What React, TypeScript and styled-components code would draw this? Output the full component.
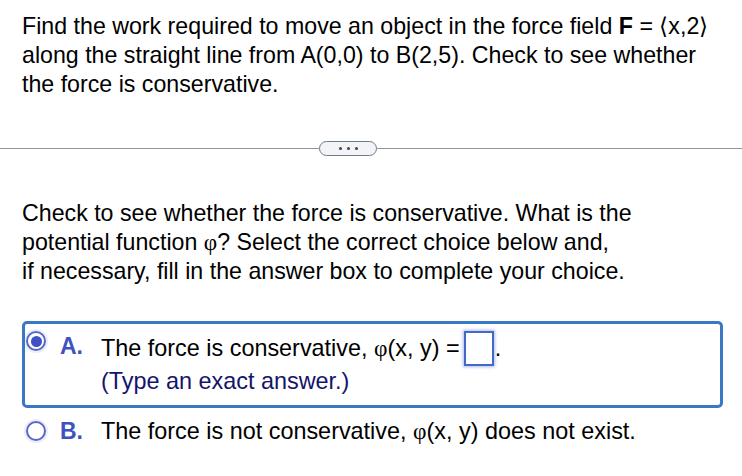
import styled, { createGlobalStyle } from "styled-components";

const GlobalStyle = createGlobalStyle`
  html, body {
    margin: 0;
    padding: 0;
    background: #ffffff;
  }
  body {
    font-family: "Liberation Sans", Arial, sans-serif;
    color: #000000;
  }
`;

const Page = styled.div`
  width: 742px;
  height: 476px;
  overflow: hidden;
  display: flex;
  flex-direction: column;
`;

const Prompt = styled.p<{ $top: number }>`
  margin: ${(p) => p.$top}px 0 0 0;
  padding: 0 22px;
  font-size: 23.2px;
  line-height: 29px;
  white-space: nowrap;
`;

const Bold = styled.b`
  font-weight: 700;
`;

const Phi = styled.span`
  font-family: "Liberation Serif", "Times New Roman", serif;
`;

const Divider = styled.div`
  margin-top: 42px;
  height: 15px;
  display: flex;
  align-items: center;
`;

const Rule = styled.div<{ $w?: number }>`
  height: 1px;
  background: #8d96a2;
  flex: ${(p) => (p.$w ? `0 0 ${p.$w}px` : "1 1 auto")};
`;

const Pill = styled.div`
  width: 56px;
  height: 13px;
  border: 1px solid #6f7a88;
  border-radius: 8px;
  background: #f2f4f7;
  display: flex;
  align-items: center;
  justify-content: center;
  gap: 5px;
`;

const Dot = styled.span`
  width: 3px;
  height: 3px;
  border-radius: 50%;
  background: #3c4450;
`;

const Choices = styled.div`
  margin-top: 35px;
  padding: 0 19px 0 22px;
  display: flex;
  flex-direction: column;
`;

const Choice = styled.div<{ $selected?: boolean }>`
  display: grid;
  grid-template-columns: 34px 41px 1fr;
  align-items: start;
  padding: ${(p) => (p.$selected ? "7px 0 0 1px" : "4px 0 0 1px")};
  border: 3px solid ${(p) => (p.$selected ? "#3a78c6" : "transparent")};
  border-radius: 5px;
  height: ${(p) => (p.$selected ? "87px" : "auto")};
  box-sizing: border-box;
`;

const Radio = styled.span<{ $on?: boolean; $top: number }>`
  margin-top: ${(p) => p.$top}px;
  width: 16px;
  height: 16px;
  border-radius: 50%;
  border: 2px solid #5666cb;
  box-shadow: 0 0 0 2px rgba(88, 103, 204, 0.12);
  display: flex;
  align-items: center;
  justify-content: center;
  &::after {
    content: "";
    display: ${(p) => (p.$on ? "block" : "none")};
    width: 11px;
    height: 11px;
    border-radius: 50%;
    background: #3f51c4;
  }
`;

const Letter = styled.span<{ $h: number }>`
  font-size: 23px;
  font-weight: 700;
  color: #4052bd;
  line-height: ${(p) => p.$h}px;
`;

const Body = styled.div`
  font-size: 23.4px;
  line-height: 32px;
`;

const Line = styled.div`
  display: flex;
  align-items: center;
  height: 34px;
`;

const Hint = styled.div`
  color: #14146b;
`;

const AnswerBox = styled.span`
  display: inline-block;
  width: 26px;
  height: 31px;
  margin: 0 1px 0 4px;
  border: 2px solid #4169c8;
  box-shadow: 0 0 3px 1px rgba(70, 105, 210, 0.45);
  background: #ffffff;
`;

export default function App() {
  return (
    <Page>
      <GlobalStyle />
      <Prompt $top={12}>
        Find the work required to move an object in the force field{" "}
        <Bold>F</Bold> = ⟨x,2⟩
        <br />
        along the straight line from A(0,0) to B(2,5). Check to see whether
        <br />
        the force is conservative.
      </Prompt>
      <Divider>
        <Rule $w={319} />
        <Pill>
          <Dot />
          <Dot />
          <Dot />
        </Pill>
        <Rule />
      </Divider>
      <Prompt $top={43}>
        Check to see whether the force is conservative. What is the
        <br />
        potential function <Phi>φ</Phi>? Select the correct choice below and,
        <br />
        if necessary, fill in the answer box to complete your choice.
      </Prompt>
      <Choices>
        <Choice $selected>
          <Radio $on $top={0} />
          <Letter $h={30}>A.</Letter>
          <Body>
            <Line>
              The force is conservative,&nbsp;<Phi>φ</Phi>(x, y) =
              <AnswerBox />.
            </Line>
            <Hint>(Type an exact answer.)</Hint>
          </Body>
        </Choice>
        <Choice>
          <Radio $top={6} />
          <Letter $h={32}>B.</Letter>
          <Body>
            The force is not conservative, <Phi>φ</Phi>(x, y) does not exist.
          </Body>
        </Choice>
      </Choices>
    </Page>
  );
}
